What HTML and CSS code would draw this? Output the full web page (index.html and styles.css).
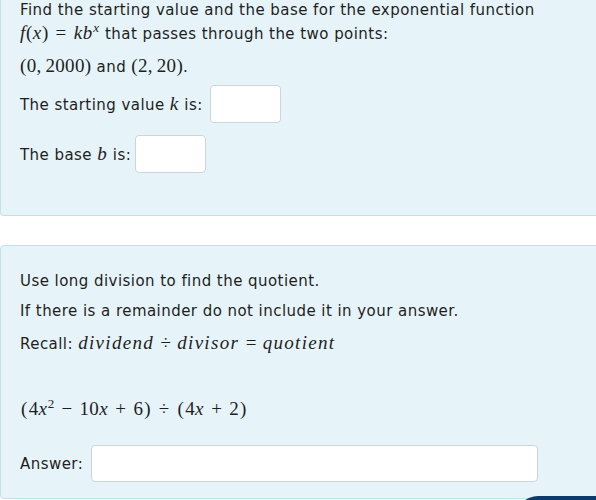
FILE: index.html
```html
<!DOCTYPE html>
<html>
<head>
<meta charset="utf-8">
<link rel="stylesheet" href="styles.css">
</head>
<body>
<div class="page">
  <section class="panel panel-one">
    <p class="txt first">Find the starting value and the base for the exponential function <span class="m"><i>f</i>(<i>x</i>)<span class="op">=</span><i>k</i><i>b</i><sup><i>x</i></sup></span> that passes through the two points:</p>
    <p class="txt pts"><span class="m">(0,<span class="sp"></span>2000)</span> and <span class="m">(2,<span class="sp"></span>20)</span>.</p>
    <div class="row row-k"><span class="lbl">The starting value <span class="m"><i>k</i></span> is:</span><span class="box small"></span></div>
    <div class="row row-b"><span class="lbl">The base <span class="m"><i>b</i></span> is:</span><span class="box small"></span></div>
  </section>
  <section class="panel panel-two">
    <p class="txt l1">Use long division to find the quotient.</p>
    <p class="txt l2">If there is a remainder do not include it in your answer.</p>
    <p class="txt l3">Recall: <span class="m wide-id"><i>dividend</i><span class="op">÷</span><i>divisor</i><span class="op">=</span><i>quotient</i></span></p>
    <p class="txt expr"><span class="m"><span class="paren">(</span>4<i>x</i><sup>2</sup><span class="op">−</span>10<i>x</i><span class="op">+</span>6<span class="paren">)</span><span class="op">÷</span><span class="paren">(</span>4<i>x</i><span class="op">+</span>2<span class="paren">)</span></span></p>
    <div class="row row-ans"><span class="lbl">Answer:</span><span class="box wide"></span></div>
  </section>
  <div class="fab"></div>
</div>
</body>
</html>
```
FILE: styles.css
```css
html, body {
  margin: 0;
  padding: 0;
  background: #ffffff;
}
body {
  font-family: "DejaVu Sans", Verdana, sans-serif;
  font-size: 15px;
  letter-spacing: 0.45px;
  color: #1e1e1e;
  overflow: hidden;
  height: 500px;
}
.page {
  position: relative;
  width: 596px;
  height: 500px;
  overflow: hidden;
}
.panel {
  background: #e6f4f9;
  border: 1px solid #bfe3ea;
  border-radius: 4px;
  margin-right: -12px;
  padding-left: 19px;
  padding-right: 20px;
}
.panel-one {
  border-top: none;
  border-radius: 0 0 4px 4px;
  height: 218px;
  box-sizing: border-box;
}
.panel-two {
  margin-top: 29px;
  padding-top: 23px;
  padding-bottom: 16px;
}
.txt {
  margin: 0;
  line-height: 24px;
}
.first { margin-top: -2px; }
.pts { margin-top: 9px; }
.m {
  font-family: "Liberation Serif", "Times New Roman", serif;
  font-size: 19px;
  line-height: 1;
  letter-spacing: 0.3px;
}
.m i { font-style: italic; padding-right: 0.5px; }
.wide-id i { letter-spacing: 1.3px; }
.m sup {
  font-size: 13px;
  line-height: 0;
  vertical-align: 7px;
}
.op { padding: 0 6px; }
.first .op { padding: 0 7px; }
.expr .op { padding: 0 7px; }
.paren { padding: 0 1px; }
.sp { display: inline-block; width: 4px; }
.row {
  display: flex;
  align-items: center;
  gap: 7px;
}
.row-k { margin-top: 6px; }
.row-b { margin-top: 12px; }
.row-b { gap: 4px; }
.box {
  display: block;
  background: #ffffff;
  border: 1px solid #ccd5dc;
  border-radius: 4px;
  box-sizing: border-box;
  height: 38px;
}
.small { width: 71px; }
.l2 { margin-top: 6px; }
.l3 { margin-top: 9px; }
.expr { margin-top: 42px; }
.row-ans { margin-top: 23px; gap: 8px; }
.row-ans .box { height: 37px; }
.wide { width: 447px; }
.fab {
  position: absolute;
  left: 516px;
  top: 496px;
  width: 120px;
  height: 40px;
  border-radius: 22px 0 0 0;
  background: #0d3a6c;
}
```
